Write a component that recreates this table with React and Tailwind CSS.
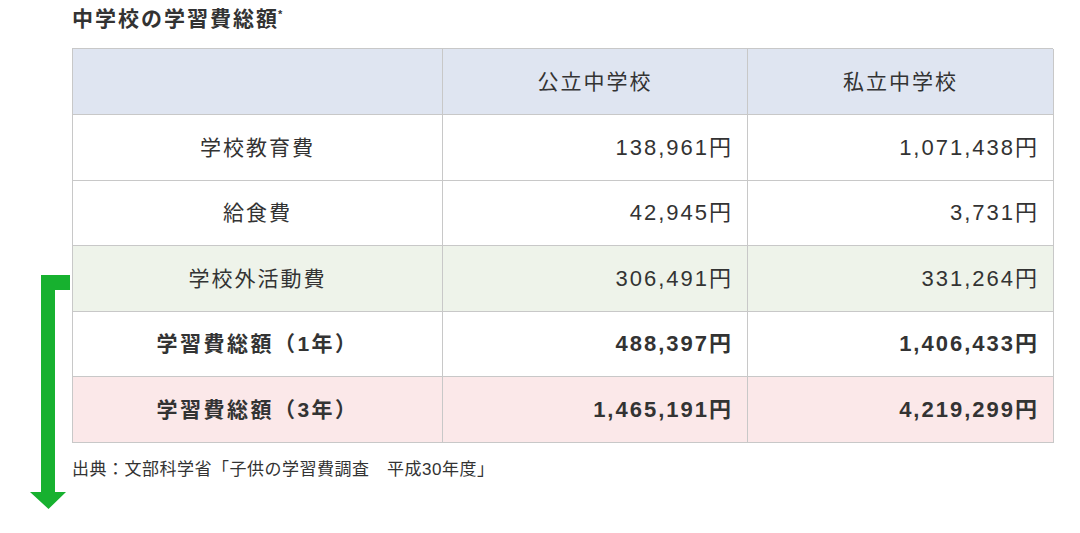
import React from "react";

const rows = [
  { label: "学校教育費", a: "138,961円", b: "1,071,438円", bg: "bg-white", bold: false },
  { label: "給食費", a: "42,945円", b: "3,731円", bg: "bg-white", bold: false },
  { label: "学校外活動費", a: "306,491円", b: "331,264円", bg: "bg-[#eef3ea]", bold: false },
  { label: "学習費総額（1年）", a: "488,397円", b: "1,406,433円", bg: "bg-white", bold: true },
  { label: "学習費総額（3年）", a: "1,465,191円", b: "4,219,299円", bg: "bg-[#fbe8e9]", bold: true },
];

export default function App() {
  return (
    <div
      className="relative w-[1080px] h-[533px] bg-white text-[#333]"
      style={{ fontFamily: '"Liberation Sans", "Noto Sans CJK JP", sans-serif' }}
    >
      <div className="pl-[72px] pt-[5px]">
        <h2 className="h-[31px] text-[21px] leading-[28px] font-bold tracking-[2px] flex items-start">
          <span>中学校の学習費総額</span>
          <span className="text-[11px] leading-[11px] mt-[4px] ml-[-1px]">*</span>
        </h2>
        <div className="mt-[12px] w-[981px] border-t border-l border-[#c8c8c8] grid grid-cols-[370px_305px_306px]">
          <div className="h-[66px] bg-[#dfe5f1] border-r border-b border-[#c8c8c8]" />
          <div className="h-[66px] bg-[#dfe5f1] border-r border-b border-[#c8c8c8] flex items-center justify-center text-[21px] tracking-[2px]">
            公立中学校
          </div>
          <div className="h-[66px] bg-[#dfe5f1] border-r border-b border-[#c8c8c8] flex items-center justify-center text-[21px] tracking-[2px]">
            私立中学校
          </div>
          {rows.map((r) => (
            <React.Fragment key={r.label}>
              <div
                className={`h-[65.5px] ${r.bg} border-r border-b border-[#c8c8c8] flex items-center justify-center text-[21px] ${r.bold ? "font-bold tracking-[2.5px]" : "tracking-[2px]"}`}
              >
                {r.label}
              </div>
              <div
                className={`h-[65.5px] ${r.bg} border-r border-b border-[#c8c8c8] flex items-center justify-end pr-[14px] text-[22px] tracking-[2px] ${r.bold ? "font-bold" : ""}`}
              >
                {r.a}
              </div>
              <div
                className={`h-[65.5px] ${r.bg} border-r border-b border-[#c8c8c8] flex items-center justify-end pr-[14px] text-[22px] tracking-[2px] ${r.bold ? "font-bold" : ""}`}
              >
                {r.b}
              </div>
            </React.Fragment>
          ))}
        </div>
        <p className="mt-[15px] text-[17px] leading-[24px] tracking-[0.5px]">
          出典：文部科学省「子供の学習費調査　平成30年度」
        </p>
      </div>
      <svg className="absolute left-[30px] top-[275px]" width="42" height="236" viewBox="0 0 42 236">
        <path d="M11 0 H40 V15 H25 V217 H36 L18.5 234 L0 217 H11 Z" fill="#17b12f" />
      </svg>
    </div>
  );
}
